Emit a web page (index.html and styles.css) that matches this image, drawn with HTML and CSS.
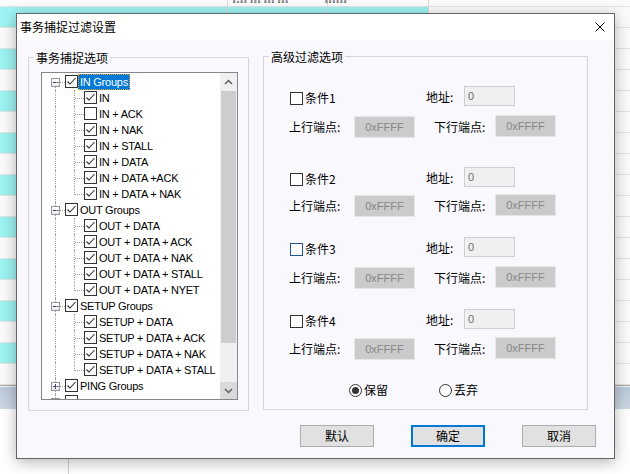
FILE: index.html
```html
<!DOCTYPE html>
<html lang="zh-CN">
<head>
<meta charset="utf-8">
<title>事务捕捉过滤设置</title>
<link rel="stylesheet" href="styles.css">
</head>
<body>
<svg class="defs" aria-hidden="true">
  <symbol id="ck" viewBox="0 0 11 11"><polyline points="1.5,5.5 4,8 9.5,2" fill="none" stroke="#333" stroke-width="1.1"/></symbol>
</svg>

<div class="desk">
  <div class="r top"><span class="t1">0x00 000 000 000</span><span class="t2">000000</span></div>
  <div class="r c"></div><div class="r"></div>
  <div class="r c"></div><div class="r"></div>
  <div class="r c"></div><div class="r"></div>
  <div class="r c"></div><div class="r"></div>
  <div class="r c"></div><div class="r"></div>
  <div class="r c"></div><div class="r"></div>
  <div class="r c"></div><div class="r"></div>
  <div class="r c"></div><div class="r"></div>
  <div class="r c"></div><div class="r"></div>
  <div class="sep"></div>
  <div class="bar"></div>
  <div class="below"></div>
</div>

<div class="win">
  <div class="titlebar">
    <span class="title">事务捕捉过滤设置</span>
    <svg class="close" viewBox="0 0 10 10"><path d="M0.5 0.5L9.5 9.5M9.5 0.5L0.5 9.5" stroke="#000" stroke-width="1"/></svg>
  </div>
  <div class="client">
    <div class="groups">
      <fieldset class="grp left">
        <legend>事务捕捉选项</legend>
        <div class="tree">
          <div class="items">
            <div class="it"><i class="g rt first"><b class="ex"></b></i><i class="cb"><svg><use href="#ck"/></svg></i><span class="tx sel">IN Groups</span></div>
            <div class="it"><i class="g v"></i><i class="g t"></i><i class="cb"><svg><use href="#ck"/></svg></i><span class="tx">IN</span></div>
            <div class="it"><i class="g v"></i><i class="g t"></i><i class="cb"></i><span class="tx">IN + ACK</span></div>
            <div class="it"><i class="g v"></i><i class="g t"></i><i class="cb"><svg><use href="#ck"/></svg></i><span class="tx">IN + NAK</span></div>
            <div class="it"><i class="g v"></i><i class="g t"></i><i class="cb"><svg><use href="#ck"/></svg></i><span class="tx">IN + STALL</span></div>
            <div class="it"><i class="g v"></i><i class="g t"></i><i class="cb"><svg><use href="#ck"/></svg></i><span class="tx">IN + DATA</span></div>
            <div class="it"><i class="g v"></i><i class="g t"></i><i class="cb"><svg><use href="#ck"/></svg></i><span class="tx">IN + DATA +ACK</span></div>
            <div class="it"><i class="g v"></i><i class="g l"></i><i class="cb"><svg><use href="#ck"/></svg></i><span class="tx">IN + DATA + NAK</span></div>
            <div class="it"><i class="g rt"><b class="ex"></b></i><i class="cb"><svg><use href="#ck"/></svg></i><span class="tx">OUT Groups</span></div>
            <div class="it"><i class="g v"></i><i class="g t"></i><i class="cb"><svg><use href="#ck"/></svg></i><span class="tx">OUT + DATA</span></div>
            <div class="it"><i class="g v"></i><i class="g t"></i><i class="cb"><svg><use href="#ck"/></svg></i><span class="tx">OUT + DATA + ACK</span></div>
            <div class="it"><i class="g v"></i><i class="g t"></i><i class="cb"><svg><use href="#ck"/></svg></i><span class="tx">OUT + DATA + NAK</span></div>
            <div class="it"><i class="g v"></i><i class="g t"></i><i class="cb"><svg><use href="#ck"/></svg></i><span class="tx">OUT + DATA + STALL</span></div>
            <div class="it"><i class="g v"></i><i class="g l"></i><i class="cb"><svg><use href="#ck"/></svg></i><span class="tx">OUT + DATA + NYET</span></div>
            <div class="it"><i class="g rt"><b class="ex"></b></i><i class="cb"><svg><use href="#ck"/></svg></i><span class="tx">SETUP Groups</span></div>
            <div class="it"><i class="g v"></i><i class="g t"></i><i class="cb"><svg><use href="#ck"/></svg></i><span class="tx">SETUP + DATA</span></div>
            <div class="it"><i class="g v"></i><i class="g t"></i><i class="cb"><svg><use href="#ck"/></svg></i><span class="tx">SETUP + DATA + ACK</span></div>
            <div class="it"><i class="g v"></i><i class="g t"></i><i class="cb"><svg><use href="#ck"/></svg></i><span class="tx">SETUP + DATA + NAK</span></div>
            <div class="it"><i class="g v"></i><i class="g l"></i><i class="cb"><svg><use href="#ck"/></svg></i><span class="tx">SETUP + DATA + STALL</span></div>
            <div class="it"><i class="g rt"><b class="ex plus"></b></i><i class="cb"><svg><use href="#ck"/></svg></i><span class="tx">PING Groups</span></div>
            <div class="it"><i class="g rt"><b class="ex plus"></b></i><i class="cb"></i><span class="tx"></span></div>
          </div>
          <div class="sb">
            <div class="sbb"><svg viewBox="0 0 9 6"><polyline points="1,5 4.5,1.5 8,5" fill="none" stroke="#606060" stroke-width="1.5"/></svg></div>
            <div class="track"><div class="thumb"></div></div>
            <div class="sbb hov"><svg viewBox="0 0 9 6"><polyline points="1,1 4.5,4.5 8,1" fill="none" stroke="#606060" stroke-width="1.5"/></svg></div>
          </div>
        </div>
      </fieldset>

      <fieldset class="grp right">
        <legend>高级过滤选项</legend>
        <div class="adv">
          <div class="cond c1">
            <div class="ra">
              <div class="opt"><i class="ck"></i><span class="ck-text">条件1</span></div>
              <span class="addr-l">地址:</span>
              <div class="addr">0</div>
            </div>
            <div class="rb">
              <span class="ep-l">上行端点:</span><div class="ep">0xFFFF</div>
              <span class="ep-l two">下行端点:</span><div class="ep top">0xFFFF</div>
            </div>
          </div>
          <div class="cond c2">
            <div class="ra">
              <div class="opt"><i class="ck"></i><span class="ck-text">条件2</span></div>
              <span class="addr-l">地址:</span>
              <div class="addr">0</div>
            </div>
            <div class="rb">
              <span class="ep-l">上行端点:</span><div class="ep">0xFFFF</div>
              <span class="ep-l two">下行端点:</span><div class="ep top">0xFFFF</div>
            </div>
          </div>
          <div class="cond c3">
            <div class="ra">
              <div class="opt"><i class="ck hover"></i><span class="ck-text">条件3</span></div>
              <span class="addr-l">地址:</span>
              <div class="addr">0</div>
            </div>
            <div class="rb">
              <span class="ep-l">上行端点:</span><div class="ep">0xFFFF</div>
              <span class="ep-l two">下行端点:</span><div class="ep top">0xFFFF</div>
            </div>
          </div>
          <div class="cond c4">
            <div class="ra">
              <div class="opt"><i class="ck"></i><span class="ck-text">条件4</span></div>
              <span class="addr-l">地址:</span>
              <div class="addr">0</div>
            </div>
            <div class="rb">
              <span class="ep-l">上行端点:</span><div class="ep">0xFFFF</div>
              <span class="ep-l two">下行端点:</span><div class="ep top">0xFFFF</div>
            </div>
          </div>
          <div class="radios">
            <label class="radio first"><i class="rad on"></i>保留</label>
            <label class="radio"><i class="rad"></i>丢弃</label>
          </div>
        </div>
      </fieldset>
    </div>

    <div class="btns">
      <div class="btn">默认</div>
      <div class="btn def">确定</div>
      <div class="btn">取消</div>
    </div>
  </div>
</div>
</body>
</html>
```

FILE: styles.css
```css
* { box-sizing: border-box; }
html, body { margin: 0; padding: 0; }
body {
  width: 630px;
  height: 474px;
  overflow: hidden;
  position: relative;
  background: #fff;
  font-family: "Noto Sans CJK SC", "Liberation Sans", sans-serif;
  font-size: 12px;
  color: #000;
}
.defs { position: absolute; width: 0; height: 0; overflow: hidden; }

/* background table */
.desk { height: 474px; display: flex; flex-direction: column; }
.r {
  flex: none;
  height: 21px;
  border-bottom: 1px solid #e2e2e2;
  background:
    linear-gradient(90deg, transparent 227px, #d9d9d9 227px 228px, transparent 228px 327px, #d9d9d9 327px 328px, transparent 328px 428px, #d9d9d9 428px 429px, transparent 429px),
    #fbfbfb;
}
.r.c {
  background:
    linear-gradient(90deg, transparent 227px, #d9d9d9 227px 228px, transparent 228px 327px, #d9d9d9 327px 328px, transparent 328px 428px, #d9d9d9 428px 429px, transparent 429px),
    linear-gradient(90deg, #9ef3f3 0 428px, #fbfbfb 428px);
}
.r.top { height: 7px; display: flex; align-items: flex-start; font: bold 4px/4px "Liberation Sans", sans-serif; color: #222; }
.t1 { margin-left: 233px; letter-spacing: 1.5px; }
.t2 { margin-left: 36px; letter-spacing: 1.5px; }
.sep { flex: none; height: 2px; border-top: 1px solid #a9a9a9; background: #f4f4f4; }
.bar { flex: none; height: 22px; background: linear-gradient(#bac9da, #ccd7e3); }
.below { flex: 1; background: linear-gradient(90deg, transparent 68px, #cfcfcf 68px 69px, transparent 69px), #fff; }

/* dialog window */
.win {
  position: absolute;
  left: 16px;
  top: 13px;
  width: 599px;
  height: 446px;
  border: 1px solid #656565;
  background: #f8f8fd;
  box-shadow: 0 3px 14px rgba(0, 0, 0, 0.3);
  display: flex;
  flex-direction: column;
}
.titlebar { flex: none; height: 26px; background: #fff; display: flex; align-items: center; padding-left: 3px; }
.title { flex: 1; font-size: 12px; line-height: 16px; }
.close { width: 10px; height: 10px; margin-right: 9px; }

.client { flex: 1; padding: 9px 0 0 11px; }
.groups { display: flex; align-items: flex-start; gap: 14px; }

.grp {
  margin: 0;
  padding: 0;
  min-width: 0;
  height: 361px;
  border: 1px solid #d6d6d9;
}
.grp legend { margin-left: 5px; padding: 0 2px; height: 15px; line-height: 15px; font-size: 12px; }
.grp.left { width: 221px; margin-top: 1px; }
.grp.right { width: 325px; }

/* tree view */
.tree {
  margin: 7px 0 0 12px;
  width: 197px;
  height: 328px;
  border: 1px solid #828790;
  background: #fff;
  display: flex;
}
.items { flex: 1; padding: 1px 0 0 4px; overflow: hidden; font: 11px "Liberation Sans", sans-serif; letter-spacing: -0.25px; }
.it { display: flex; height: 16px; white-space: nowrap; }
.g { flex: none; width: 19px; height: 16px; position: relative; }
.g::before { content: ""; position: absolute; left: 9px; top: 0; bottom: 0; border-left: 1px dotted #a0a0a0; }
.g.t::after, .g.l::after, .g.rt::after { content: ""; position: absolute; left: 10px; top: 8px; width: 9px; border-top: 1px dotted #a0a0a0; }
.g.l::before { bottom: 7px; }
.g.rt.first::before { top: 8px; }
.ex {
  position: absolute;
  left: 5px;
  top: 4px;
  width: 9px;
  height: 9px;
  border: 1px solid #979797;
  background: linear-gradient(#fff, #e9e9e9);
}
.ex::before { content: ""; position: absolute; left: 1px; top: 3px; width: 5px; height: 1px; background: #33478a; }
.ex.plus::after { content: ""; position: absolute; left: 3px; top: 1px; width: 1px; height: 5px; background: #33478a; }
.cb { flex: none; width: 13px; height: 13px; margin-top: 1px; border: 1px solid #333; background: #fff; }
.cb svg { display: block; width: 11px; height: 11px; }
.tx { height: 16px; line-height: 16px; padding: 0 2px; color: #000; }
.tx.sel { background: #0078d7; color: #fff; outline: 1px dotted #e9a23b; outline-offset: -1px; }

.sb { flex: none; width: 17px; background: #f0f0f0; display: flex; flex-direction: column; }
.sbb { flex: none; height: 17px; display: flex; align-items: center; justify-content: center; }
.sbb svg { width: 9px; height: 6px; }
.sbb.hov { background: #dadada; }
.track { flex: 1; }
.thumb { margin: 1px 1px 0 1px; height: 252px; background: #cdcdcd; }

/* advanced options */
.adv { padding-left: 25px; }
.cond { display: flex; flex-direction: column; }
.c1 { margin-top: 22px; gap: 9px; }
.c2 { margin-top: 28px; gap: 7px; }
.c3 { margin-top: 19px; gap: 9px; }
.c4 { margin-top: 19px; gap: 8px; }
.ra { display: flex; height: 20px; align-items: flex-start; }
.opt { width: 137px; display: flex; align-items: flex-start; }
.ck { width: 13px; height: 13px; border: 1px solid #333; background: #fff; margin: 6px 2px 0 1px; flex: none; }
.ck.hover { border-color: #1f5590; }
.ck-text { line-height: 16px; margin-top: 4px; }
.addr-l { width: 38px; line-height: 16px; margin-top: 3px; }
.addr {
  width: 51px;
  height: 20px;
  border: 1px solid #cfcfcf;
  background: #f0f0f0;
  padding-left: 3px;
  font: 11px/18px "Liberation Sans", sans-serif;
  color: #6b6b7d;
}
.rb { display: flex; height: 24px; align-items: center; }
.ep-l { width: 65px; line-height: 16px; }
.ep-l.two { margin-left: 19px; width: 61px; }
.ep {
  width: 61px;
  height: 22px;
  background: #cbcbcb;
  border: 1px solid #e6e6e6;
  color: #878787;
  text-align: center;
  font: 11px/20px "Liberation Sans", sans-serif;
}
.ep.top { align-self: flex-start; }

.radios { display: flex; height: 16px; align-items: center; margin-top: 21px; padding-left: 60px; }
.radio { display: flex; align-items: center; line-height: 16px; }
.radio.first { width: 90px; }
.rad { flex: none; width: 13px; height: 13px; border: 1px solid #333; border-radius: 50%; background: #fff; margin-right: 2px; display: flex; align-items: center; justify-content: center; }
.rad.on::after { content: ""; width: 7px; height: 7px; border-radius: 50%; background: #333; }

/* buttons */
.btns { display: flex; justify-content: flex-end; gap: 37px; padding-right: 18px; margin-top: 14px; }
.btn {
  width: 74px;
  height: 22px;
  border: 1px solid #adadad;
  background: #e1e1e1;
  display: flex;
  align-items: center;
  justify-content: center;
  font-size: 12px;
  line-height: 16px;
}
.btn.def { border: 2px solid #0078d7; }
```
